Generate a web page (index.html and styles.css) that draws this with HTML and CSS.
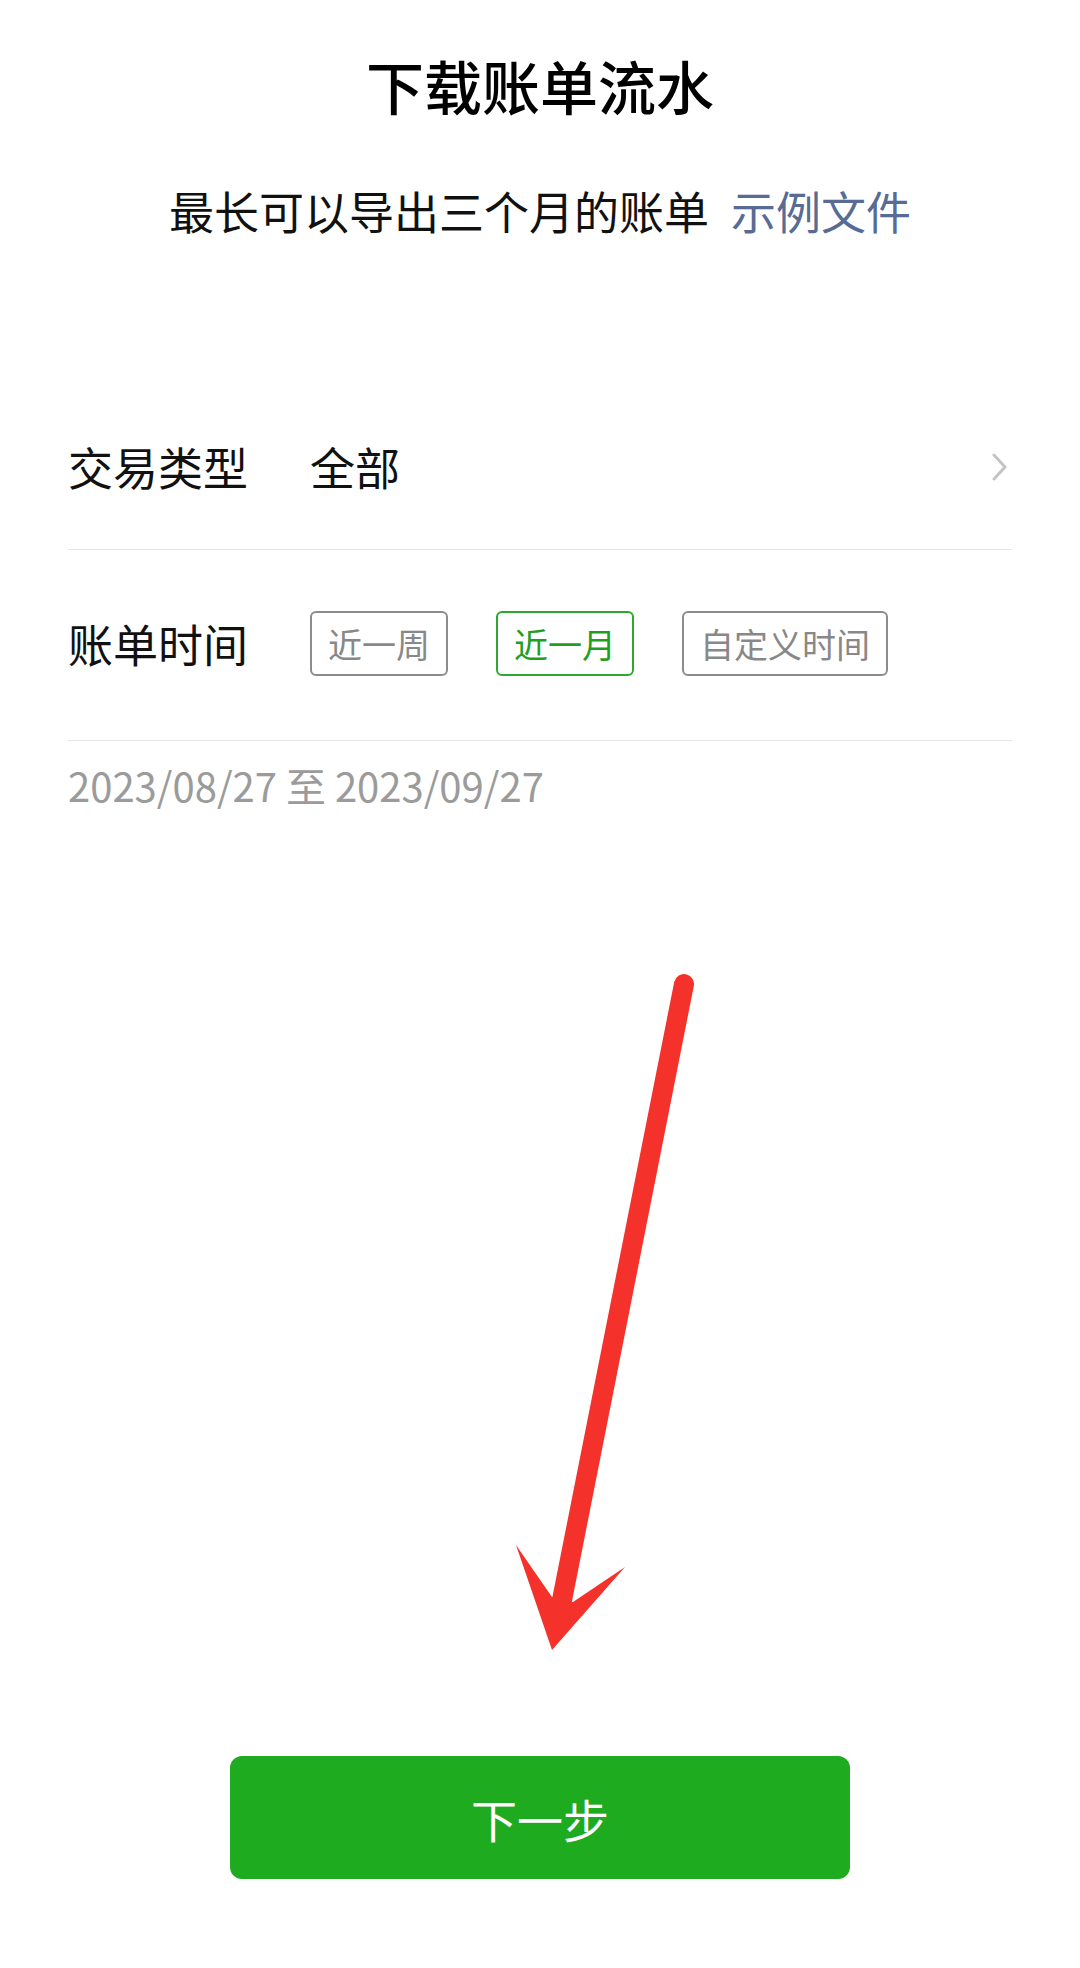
FILE: index.html
```html
<!DOCTYPE html>
<html lang="zh-CN">
<head>
  <meta charset="UTF-8" />
  <meta name="viewport" content="width=device-width, initial-scale=1.0" />
  <title>下载账单流水</title>
  <link rel="stylesheet" href="styles.css">
</head>
<body>
  <div class="page">
    <h1 class="title">下载账单流水</h1>
    <p class="subtitle">最长可以导出三个月的账单<a class="link" href="#">示例文件</a></p>

    <div class="row row-type">
      <span class="label">交易类型</span>
      <span class="value">全部</span>
      <svg class="chevron" width="16" height="28" viewBox="0 0 16 28">
        <polyline points="2,2 13,14 2,26" fill="none" stroke="#c4c4c4" stroke-width="3" stroke-linecap="round" stroke-linejoin="round" />
      </svg>
    </div>

    <div class="row row-time">
      <span class="label">账单时间</span>
      <div class="chips">
        <span class="chip">近一周</span>
        <span class="chip active">近一月</span>
        <span class="chip">自定义时间</span>
      </div>
    </div>

    <p class="range">2023/08/27 至 2023/09/27</p>

    <div class="footer">
      <button class="next">下一步</button>
    </div>
  </div>

  <!-- red annotation arrow drawn over the page -->
  <svg class="arrow" width="1080" height="1968" viewBox="0 0 1080 1968">
    <line x1="684" y1="984" x2="562" y2="1600" stroke="#f4322b" stroke-width="20" stroke-linecap="round" />
    <polygon points="552,1650 516,1545 552,1597 573,1602 625,1567" fill="#f4322b" />
  </svg>
</body>
</html>
```

FILE: styles.css
```css
body {
  margin: 0;
  background: #fff;
  font-family: "Noto Sans CJK SC", "Noto Sans", sans-serif;
  color: #111;
  position: relative;
}
.page {
  min-height: 1968px;
  box-sizing: border-box;
  padding: 45px 68px 89px;
  display: flex;
  flex-direction: column;
}
.title {
  margin: 0;
  text-align: center;
  font-size: 58px;
  line-height: 80px;
  font-weight: 500;
  color: #000;
}
.subtitle {
  margin: 56px 0 0;
  text-align: center;
  font-size: 45px;
  line-height: 60px;
  color: #111;
}
.link {
  margin-left: 22px;
  color: #576b95;
  text-decoration: none;
}
.row {
  display: flex;
  align-items: center;
  border-bottom: 1px solid #e6e6e6;
  font-size: 45px;
}
.row-type {
  margin-top: 143px;
  height: 165px;
}
.row-time {
  padding: 61px 0 64px;
}
.label {
  width: 242px;
  flex-shrink: 0;
  line-height: 60px;
}
.value {
  flex: 1;
  line-height: 60px;
}
.chevron {
  margin-right: 4px;
}
.chips {
  display: flex;
  gap: 48px;
}
.chip {
  box-sizing: border-box;
  height: 65px;
  padding: 0 16px;
  border: 2px solid #8c8c8c;
  border-radius: 6px;
  font-size: 34px;
  line-height: 61px;
  color: #888;
}
.chip.active {
  border-color: #2ea72e;
  color: #1f9e1f;
}
.range {
  margin: 19px 0 0;
  font-size: 40px;
  line-height: 50px;
  color: #9b9b9b;
}
.footer {
  margin-top: auto;
  display: flex;
  justify-content: center;
}
.next {
  width: 620px;
  height: 123px;
  border: none;
  border-radius: 12px;
  background: #1fab1f;
  color: #fff;
  font-family: inherit;
  font-size: 46px;
}
.arrow {
  position: absolute;
  left: 0;
  top: 0;
  pointer-events: none;
}
```
